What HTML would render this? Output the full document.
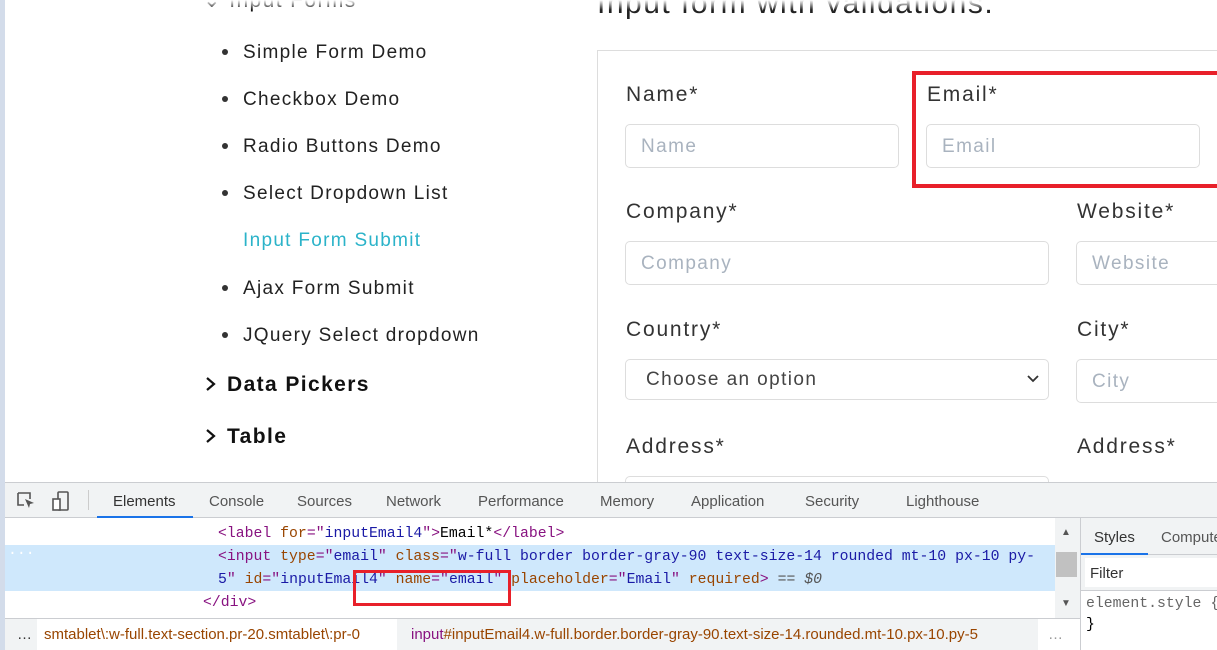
<!DOCTYPE html>
<html><head><meta charset="utf-8"><style>
*{margin:0;padding:0;box-sizing:border-box}
body{width:1217px;height:650px;overflow:hidden;background:#fff;font-family:"Liberation Sans",sans-serif;position:relative}
.a{position:absolute;white-space:nowrap}
.strip{left:0;top:0;width:5px;height:650px;background:#d3dcea}
.shadow{left:5px;top:0;width:1212px;height:10px;background:linear-gradient(#fff,rgba(255,255,255,0));z-index:2}
.nav{font-size:19px;color:#222;letter-spacing:1.3px}
.dot{width:6px;height:6px;border-radius:50%;background:#333}
.hd{font-size:21px;font-weight:bold;color:#111;letter-spacing:1.4px}
.lbl{font-size:21px;color:#333;letter-spacing:1.8px}
.inp{border:1px solid #ddd;border-radius:5px;height:44px;font-size:19px;color:#a9b3bf;padding:11px 0 0 15px;letter-spacing:1.4px}
.dt{font-size:15px;color:#333}
.mono{font-family:"Liberation Mono",monospace;font-size:14.8px}
.tg{color:#881280}.at{color:#994500}.av{color:#1a1aa6}
</style></head><body>
<div class="a strip"></div>
<div class="a shadow"></div>
<div class="a hd" style="left:203px;top:-12px;font-weight:normal">⌄ Input Forms</div>
<div class="a" style="left:597px;top:-13px;font-size:30px;color:#222;letter-spacing:1.5px">Input form with validations.</div>

<div class="a dot" style="left:222px;top:49px"></div><div class="a nav" style="left:243px;top:42px">Simple Form Demo</div>
<div class="a dot" style="left:222px;top:96px"></div><div class="a nav" style="left:243px;top:89px">Checkbox Demo</div>
<div class="a dot" style="left:222px;top:143px"></div><div class="a nav" style="left:243px;top:136px">Radio Buttons Demo</div>
<div class="a dot" style="left:222px;top:190px"></div><div class="a nav" style="left:243px;top:183px">Select Dropdown List</div>
<div class="a nav" style="left:243px;top:230px;color:#2bb3c9">Input Form Submit</div>
<div class="a dot" style="left:222px;top:285px"></div><div class="a nav" style="left:243px;top:278px">Ajax Form Submit</div>
<div class="a dot" style="left:222px;top:332px"></div><div class="a nav" style="left:243px;top:325px">JQuery Select dropdown</div>
<svg class="a" style="left:205px;top:376px" width="12" height="16"><path d="M2 2l7 6-7 6" fill="none" stroke="#111" stroke-width="2.2"/></svg>
<div class="a hd" style="left:227px;top:373px">Data Pickers</div>
<svg class="a" style="left:205px;top:428px" width="12" height="16"><path d="M2 2l7 6-7 6" fill="none" stroke="#111" stroke-width="2.2"/></svg>
<div class="a hd" style="left:227px;top:425px">Table</div>

<div class="a" style="left:597px;top:50px;width:640px;height:440px;border:1px solid #ddd"></div>
<div class="a lbl" style="left:626px;top:83px">Name*</div>
<div class="a lbl" style="left:927px;top:83px">Email*</div>
<div class="a inp" style="left:625px;top:124px;width:274px">Name</div>
<div class="a inp" style="left:926px;top:124px;width:274px">Email</div>
<div class="a" style="left:912px;top:71px;width:310px;height:117px;border:4px solid #e8202a"></div>
<div class="a lbl" style="left:626px;top:200px">Company*</div>
<div class="a lbl" style="left:1077px;top:200px">Website*</div>
<div class="a inp" style="left:625px;top:241px;width:424px">Company</div>
<div class="a inp" style="left:1076px;top:241px;width:200px">Website</div>
<div class="a lbl" style="left:626px;top:318px">Country*</div>
<div class="a lbl" style="left:1077px;top:318px">City*</div>
<div class="a inp" style="left:625px;top:359px;width:424px;height:41px;color:#444;padding:9px 0 0 20px">Choose an option<svg style="position:absolute;right:9px;top:15px" width="12" height="8"><path d="M1 1l5 5 5-5" fill="none" stroke="#333" stroke-width="1.8"/></svg></div>
<div class="a inp" style="left:1076px;top:359px;width:200px;height:44px">City</div>
<div class="a lbl" style="left:626px;top:435px">Address*</div>
<div class="a lbl" style="left:1077px;top:435px">Address*</div>
<div class="a" style="left:625px;top:476px;width:424px;height:20px;border:1px solid #ddd;border-radius:5px"></div>

<!-- devtools -->
<div class="a" style="left:5px;top:482px;width:1212px;height:168px;background:#fff;border-top:1px solid #cbcdd1"></div>
<div class="a" style="left:5px;top:483px;width:1212px;height:35px;background:#f1f3f4;border-bottom:1px solid #cbcdd1"></div>
<svg class="a" style="left:16px;top:491px" width="60" height="22" viewBox="0 0 60 22"><path d="M2 2h12v6M2 2v12h6" fill="none" stroke="#555" stroke-width="1.6"/><path d="M9 8l9 4-4 1-1 4z" fill="#555"/><rect x="42" y="1" width="10" height="18" rx="1" fill="none" stroke="#555" stroke-width="1.6"/><rect x="37" y="8" width="7" height="11" fill="#fff" stroke="#555" stroke-width="1.6"/></svg>
<div class="a" style="left:88px;top:490px;width:1px;height:20px;background:#ccc"></div>
<div class="a" style="left:97px;top:516px;width:96px;height:2px;background:#1a73e8"></div>
<div class="a dt" style="left:113px;top:493px">Elements</div>
<div class="a dt" style="left:209px;top:493px;color:#555">Console</div>
<div class="a dt" style="left:297px;top:493px;color:#555">Sources</div>
<div class="a dt" style="left:386px;top:493px;color:#555">Network</div>
<div class="a dt" style="left:478px;top:493px;color:#555">Performance</div>
<div class="a dt" style="left:600px;top:493px;color:#555">Memory</div>
<div class="a dt" style="left:691px;top:493px;color:#555">Application</div>
<div class="a dt" style="left:805px;top:493px;color:#555">Security</div>
<div class="a dt" style="left:906px;top:493px;color:#555">Lighthouse</div>

<div class="a" style="left:5px;top:545px;width:1050px;height:46px;background:#cfe8fc"></div>
<div class="a mono" style="left:8px;top:546px;color:#fff">···</div>
<div class="a mono" style="left:218px;top:526px"><span class="tg">&lt;label </span><span class="at">for</span><span class="tg">="</span><span class="av">inputEmail4</span><span class="tg">"&gt;</span>Email*<span class="tg">&lt;/label&gt;</span></div>
<div class="a mono" style="left:218px;top:549px"><span class="tg">&lt;input </span><span class="at">type</span><span class="tg">="</span><span class="av">email</span><span class="tg">" </span><span class="at">class</span><span class="tg">="</span><span class="av">w-full border border-gray-90 text-size-14 rounded mt-10 px-10 py-</span></div>
<div class="a mono" style="left:218px;top:572px"><span class="av">5</span><span class="tg">" </span><span class="at">id</span><span class="tg">="</span><span class="av">inputEmail4</span><span class="tg">" </span><span class="at">name</span><span class="tg">="</span><span class="av">email</span><span class="tg">" </span><span class="at">placeholder</span><span class="tg">="</span><span class="av">Email</span><span class="tg">" </span><span class="at">required</span><span class="tg">&gt;</span> <span style="color:#555">== <i>$0</i></span></div>
<div class="a mono" style="left:203px;top:595px"><span class="tg">&lt;/div&gt;</span></div>
<div class="a" style="left:353px;top:570px;width:158px;height:36px;border:3px solid #e8202a"></div>

<div class="a" style="left:1055px;top:518px;width:25px;height:100px;background:#f1f3f4"></div>
<div class="a" style="left:1056px;top:552px;width:21px;height:25px;background:#c1c1c1"></div>
<div class="a" style="left:1061px;top:527px;font-size:10px;color:#555">▲</div>
<div class="a" style="left:1061px;top:598px;font-size:10px;color:#555">▼</div>
<div class="a" style="left:1080px;top:518px;width:1px;height:132px;background:#cbcdd1"></div>
<div class="a" style="left:1081px;top:518px;width:136px;height:37px;background:#f1f3f4;border-bottom:1px solid #cbcdd1"></div>
<div class="a dt" style="left:1094px;top:529px">Styles</div>
<div class="a dt" style="left:1161px;top:529px;color:#555">Computed</div>
<div class="a" style="left:1081px;top:553px;width:67px;height:2px;background:#1a73e8"></div>
<div class="a" style="left:1081px;top:555px;width:136px;height:36px;background:#f1f3f4;border-bottom:1px solid #cbcdd1"></div>
<div class="a" style="left:1085px;top:558px;width:132px;height:29px;background:#fff"></div>
<div class="a dt" style="left:1090px;top:565px">Filter</div>
<div class="a mono" style="left:1086px;top:596px;color:#666">element.style {</div>
<div class="a mono" style="left:1086px;top:617px">}</div>

<div class="a" style="left:5px;top:618px;width:1075px;height:32px;background:#f1f3f4;border-top:1px solid #cbcdd1"></div>
<div class="a" style="left:37px;top:619px;width:360px;height:31px;background:#fff"></div>
<div class="a dt" style="left:17px;top:626px">…</div>
<div class="a dt" style="left:44px;top:626px;color:#994500">smtablet\:w-full.text-section.pr-20.smtablet\:pr-0</div>
<div class="a dt" style="left:411px;top:626px;color:#994500"><span style="color:#881280">input</span>#inputEmail4.w-full.border.border-gray-90.text-size-14.rounded.mt-10.px-10.py-5</div>
<div class="a" style="left:1038px;top:619px;width:42px;height:31px;background:#fff"></div>
<div class="a dt" style="left:1048px;top:626px;color:#999">…</div>
</body></html>
